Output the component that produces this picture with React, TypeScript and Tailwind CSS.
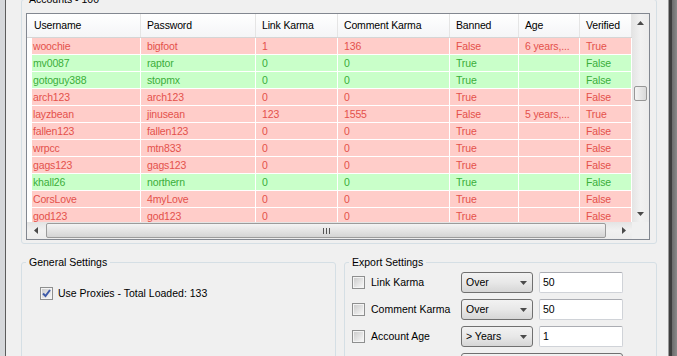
import { ReactNode } from 'react';

type Row = {
    user: string;
    pass: string;
    link: string;
    comment: string;
    banned: string;
    age: string;
    verified: string;
    good: boolean;
};

const rows: Row[] = [
    { user: 'woochie', pass: 'bigfoot', link: '1', comment: '136', banned: 'False', age: '6 years,...', verified: 'True', good: false },
    { user: 'mv0087', pass: 'raptor', link: '0', comment: '0', banned: 'True', age: '', verified: 'False', good: true },
    { user: 'gotoguy388', pass: 'stopmx', link: '0', comment: '0', banned: 'True', age: '', verified: 'False', good: true },
    { user: 'arch123', pass: 'arch123', link: '0', comment: '0', banned: 'True', age: '', verified: 'False', good: false },
    { user: 'layzbean', pass: 'jinusean', link: '123', comment: '1555', banned: 'False', age: '5 years,...', verified: 'True', good: false },
    { user: 'fallen123', pass: 'fallen123', link: '0', comment: '0', banned: 'True', age: '', verified: 'False', good: false },
    { user: 'wrpcc', pass: 'mtn833', link: '0', comment: '0', banned: 'True', age: '', verified: 'False', good: false },
    { user: 'gags123', pass: 'gags123', link: '0', comment: '0', banned: 'True', age: '', verified: 'False', good: false },
    { user: 'khall26', pass: 'northern', link: '0', comment: '0', banned: 'True', age: '', verified: 'False', good: true },
    { user: 'CorsLove', pass: '4myLove', link: '0', comment: '0', banned: 'True', age: '', verified: 'False', good: false },
    { user: 'god123', pass: 'god123', link: '0', comment: '0', banned: 'True', age: '', verified: 'False', good: false },
];

const columns = [
    { title: 'Username', w: 'w-[114px]' },
    { title: 'Password', w: 'w-[115px]' },
    { title: 'Link Karma', w: 'w-[82px]' },
    { title: 'Comment Karma', w: 'w-[112px]' },
    { title: 'Banned', w: 'w-[69px]' },
    { title: 'Age', w: 'w-[61px]' },
    { title: 'Verified', w: 'w-[52px]' },
];

function Arrow({ dir }: { dir: 'up' | 'down' | 'left' | 'right' }) {
    const pts = {
        up: '0,4 3.5,0 7,4',
        down: '0,0 7,0 3.5,4',
        left: '4,0 4,7 0,3.5',
        right: '0,0 0,7 4,3.5',
    }[dir];
    const horiz = dir === 'left' || dir === 'right';
    return (
        <svg width={horiz ? 4 : 7} height={horiz ? 7 : 4} viewBox={horiz ? '0 0 4 7' : '0 0 7 4'}>
            <polygon points={pts} fill="#4a4a4a" />
        </svg>
    );
}

function Checkbox({ checked = false }: { checked?: boolean }) {
    return (
        <div className="flex h-[13px] w-[13px] shrink-0 items-center justify-center border border-[#8e8f8f] bg-[#f4f4f4]">
            <div className="relative h-[9px] w-[9px] bg-gradient-to-br from-[#cdcdcd] to-[#f6f6f6]">
                {checked && (
                    <svg className="absolute -left-[1px] -top-[1px]" width="11" height="11" viewBox="0 0 11 11">
                        <path d="M2 5.5 L4.5 8 L9 2" stroke="#3d5aa8" strokeWidth="2" fill="none" />
                    </svg>
                )}
            </div>
        </div>
    );
}

function GroupBox({ title, className, children }: { title: string; className: string; children: ReactNode }) {
    return (
        <fieldset className={`rounded-[3px] border border-[#d5dfe5] ${className}`}>
            <legend className="ml-[4px] px-[3px] text-[10.5px] leading-[13px] text-black">{title}</legend>
            {children}
        </fieldset>
    );
}

function Combo({ label, w }: { label: string; w: string }) {
    return (
        <div className={`flex h-[21px] ${w} items-center justify-between rounded-[3px] border border-[#707070] bg-gradient-to-b from-[#f2f2f2] via-[#e8e8e8] to-[#d6d6d6] pl-[4px] pr-[5px] pt-[1px] text-[10.5px] text-black`}>
            <span>{label}</span>
            <Arrow dir="down" />
        </div>
    );
}

function TextBox({ value }: { value: string }) {
    return (
        <div className="flex h-[21px] w-[84px] items-center rounded-[2px] border border-[#d0d3d8] border-t-[#abadb3] bg-white pl-[3px] text-[10.5px] text-black">
            {value}
        </div>
    );
}

function ListView() {
    return (
        <div className="ml-[4px] mt-[7px] flex h-[227px] w-[624px] flex-col border border-[#828790] bg-white">
            <div className="flex h-[208px]">
                <div className="w-[605px] overflow-hidden text-[10.5px] tracking-[-0.15px]">
                    {/* header */}
                    <div className="flex h-[24px] border-b border-[#d5d5d5] bg-gradient-to-b from-white to-[#f4f5f7]">
                        {columns.map((c, i) => (
                            <div
                                key={c.title}
                                className={`${c.w} flex items-center border-r border-[#e5e5e5] ${i === 0 ? 'pl-[7px]' : 'pl-[6px]'} text-black`}
                            >
                                {c.title}
                            </div>
                        ))}
                    </div>
                    {rows.map((r) => {
                        const cells = [r.user, r.pass, r.link, r.comment, r.banned, r.age, r.verified];
                        const tone = r.good ? 'bg-[#c9ffc9] text-[#3aae3a]' : 'bg-[#ffcdc9] text-[#e4514b]';
                        return (
                            <div key={r.user} className="flex h-[17px] border-b border-white">
                                {cells.map((v, i) => (
                                    <div
                                        key={i}
                                        className={`${columns[i].w} ${tone} flex items-center overflow-hidden whitespace-nowrap border-r border-white pt-[2px] ${
                                            i === 0 ? 'border-l-[5px] border-l-white pl-[1px]' : 'pl-[6px]'
                                        }`}
                                    >
                                        {v}
                                    </div>
                                ))}
                            </div>
                        );
                    })}
                </div>
                {/* vertical scrollbar */}
                <div className="flex w-[17px] flex-col bg-gradient-to-r from-[#e4e4e4] via-[#f1f1f1] to-[#ececec]">
                    <div className="flex h-[17px] items-center justify-center">
                        <Arrow dir="up" />
                    </div>
                    <div className="ml-[2px] mt-[55px] h-[15px] w-[13px] rounded-[2px] border border-[#979797] bg-gradient-to-r from-[#f4f4f4] to-[#d9d9d9]" />
                    <div className="flex-1" />
                    <div className="flex h-[17px] items-center justify-center">
                        <Arrow dir="down" />
                    </div>
                </div>
            </div>
            {/* horizontal scrollbar */}
            <div className="flex h-[17px]">
                <div className="flex w-[605px] items-center bg-gradient-to-b from-[#e4e4e4] via-[#f1f1f1] to-[#ececec]">
                    <div className="flex w-[17px] items-center justify-center">
                        <Arrow dir="left" />
                    </div>
                    <div className="ml-[2px] flex h-[15px] w-[560px] items-center justify-center rounded-[2px] border border-[#9b9b9b] bg-gradient-to-b from-[#f4f4f4] to-[#d4d4d4]">
                        <div className="flex gap-[2px]">
                            <div className="h-[6px] w-px bg-[#555]" />
                            <div className="h-[6px] w-px bg-[#555]" />
                            <div className="h-[6px] w-px bg-[#555]" />
                        </div>
                    </div>
                    <div className="flex-1" />
                    <div className="flex w-[17px] items-center justify-center">
                        <Arrow dir="right" />
                    </div>
                </div>
                <div className="w-[17px] bg-[#f0f0f0]" />
            </div>
        </div>
    );
}

export default function App() {
    return (
        <div className="flex h-[356px] w-[677px] overflow-hidden bg-[#f0f0f0] font-['Liberation_Sans',Arial,sans-serif]">
            {/* left window edge */}
            <div className="w-[5px] bg-[#d6d8db]" />
            <div className="w-px bg-[#5c5c5c]" />

            <div className="w-[662px] pl-[15px] pr-[11px]">
                <GroupBox title="Accounts - 100" className="-mt-[7px] h-[251px]">
                    <ListView />
                </GroupBox>

                <div className="mt-[12px] flex gap-[8px]">
                    <GroupBox title="General Settings" className="h-[120px] w-[315px]">
                        <div className="ml-[18px] mt-[17px] flex items-center gap-[5px] text-[10.5px] text-black">
                            <Checkbox checked />
                            <span>Use Proxies - Total Loaded: 133</span>
                        </div>
                    </GroupBox>

                    <GroupBox title="Export Settings" className="h-[120px] w-[313px]">
                        <div className="mt-[3px] flex flex-col gap-[6px] pl-[7px] text-[10.5px] text-black">
                            {[
                                { label: 'Link Karma', combo: 'Over', value: '50' },
                                { label: 'Comment Karma', combo: 'Over', value: '50' },
                                { label: 'Account Age', combo: '> Years', value: '1' },
                            ].map((r) => (
                                <div key={r.label} className="flex items-center">
                                    <Checkbox />
                                    <span className="ml-[6px] w-[90px]">{r.label}</span>
                                    <Combo label={r.combo} w="w-[72px]" />
                                    <div className="ml-[6px]">
                                        <TextBox value={r.value} />
                                    </div>
                                </div>
                            ))}
                            <div className="flex items-center pl-[109px]">
                                <Combo label="" w="w-[162px]" />
                            </div>
                        </div>
                    </GroupBox>
                </div>
            </div>

            {/* right window frame */}
            <div className="w-px bg-[#9a9a9a]" />
            <div className="w-[3px] bg-[#3e3e3e]" />
            <div className="flex-1 bg-gradient-to-r from-[#6c6c6c] to-[#8a8a8a]" />
        </div>
    );
}
